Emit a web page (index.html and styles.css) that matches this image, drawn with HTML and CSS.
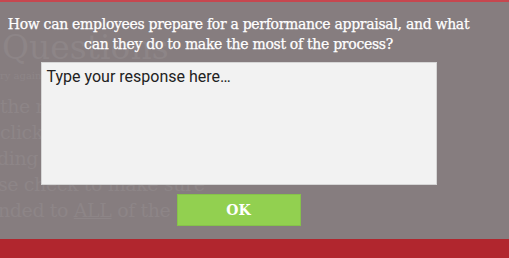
FILE: index.html
```html
<!DOCTYPE html>
<html>
<head>
<meta charset="utf-8">
<link rel="stylesheet" href="styles.css">
</head>
<body>
<div class="page">
  <div class="topbar"></div>
  <main class="behind">
    <div class="bg-title">Questions</div>
    <div class="bg-small">(try again)</div>
    <div class="bg-line l1">the right</div>
    <div class="bg-line l2">click</div>
    <div class="bg-line l3">ding</div>
    <div class="bg-line l4">se check to make sure</div>
    <div class="bg-line l5">nded to <u>ALL</u> of the</div>
  </main>
  <footer class="footer"></footer>
  <div class="overlay">
    <div class="dialog">
      <p class="question">How can employees prepare for a performance appraisal, and what<br>can they do to make the most of the process?</p>
      <textarea class="answer" placeholder="Type your response here…"></textarea>
      <button class="ok">OK</button>
    </div>
  </div>
</div>
</body>
</html>
```
FILE: styles.css
```css
html, body {
  margin: 0;
  padding: 0;
}
body {
  width: 509px;
  height: 258px;
  overflow: hidden;
  background: #867d7f;
}
.page {
  position: relative;
  width: 509px;
  height: 258px;
  display: flex;
  flex-direction: column;
  overflow: hidden;
}
.topbar {
  height: 2px;
  background: #c6474f;
  flex: none;
}
.behind {
  flex: 1;
  color: #8d8587;
  font-family: "DejaVu Serif", serif;
  white-space: nowrap;
  padding-top: 26px;
}
.bg-title {
  font-size: 33px;
  line-height: 40px;
  margin-left: 2px;
  font-weight: 300;
}
.bg-small {
  font-size: 10px;
  line-height: 14px;
  margin-left: -8px;
  margin-top: 1px;
}
.bg-line {
  font-size: 19px;
  letter-spacing: -0.4px;
  line-height: 26px;
}
.l1 { margin-left: 0; margin-top: 10px; }
.l2 { margin-left: 0; }
.l3 { margin-left: -3px; }
.l4 { margin-left: -2px; }
.l5 { margin-left: -2px; }
.footer {
  height: 19px;
  flex: none;
  background: #b1262e;
}
.overlay {
  position: absolute;
  left: 0;
  top: 0;
  width: 477px;
  height: 258px;
}
.dialog {
  display: flex;
  flex-direction: column;
  align-items: center;
  padding-top: 14px;
}
.question {
  margin: 0;
  color: #ffffff;
  font-family: "DejaVu Serif", serif;
  font-size: 14px;
  letter-spacing: -0.3px;
  line-height: 20px;
  text-align: center;
  white-space: nowrap;
  width: 477px;
  -webkit-text-stroke: 0.25px #ffffff;
}
.answer {
  box-sizing: border-box;
  margin-top: 8px;
  width: 396px;
  height: 123px;
  background: #f2f2f2;
  border: 1px solid #d6d6d6;
  border-radius: 0;
  padding: 4px 5px;
  font-family: Roboto, sans-serif;
  font-size: 16px;
  color: #222;
  resize: none;
  outline: none;
}
.answer::placeholder {
  color: #222;
  opacity: 1;
}
.ok {
  margin-top: 9px;
  width: 124px;
  height: 32px;
  background: #92d050;
  border: 1px solid #86c24a;
  color: #fff;
  font-family: "DejaVu Serif", serif;
  font-weight: bold;
  font-size: 14px;
  padding: 0;
  cursor: pointer;
}
```
